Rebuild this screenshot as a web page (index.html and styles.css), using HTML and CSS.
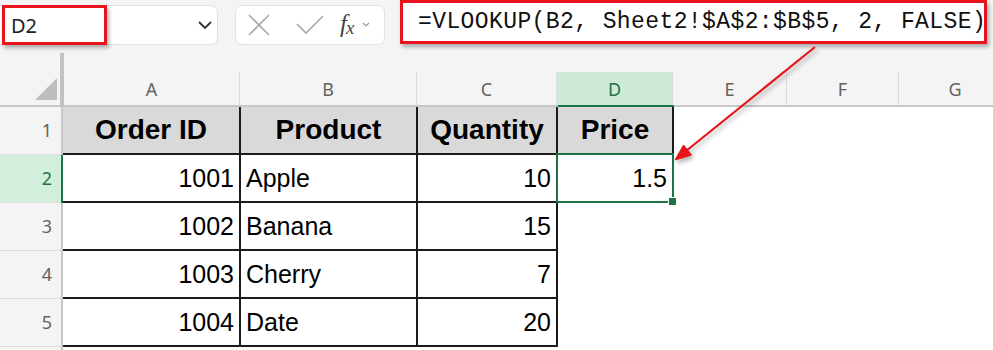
FILE: index.html
```html
<!DOCTYPE html>
<html lang="en">
<head>
  <meta charset="UTF-8" />
  <title>VLOOKUP – Price</title>
  <link rel="stylesheet" href="styles.css">
</head>
<body>
  <div class="toolbar">
    <div class="namebox">
      <span class="ref mark">D2</span>
      <svg class="chev" width="16" height="10" viewBox="0 0 16 10"><path d="M2 2 L8 8 L14 2" fill="none" stroke="#333" stroke-width="1.8"/></svg>
    </div>
    <div class="fxbox">
      <svg class="ico" width="22" height="22" viewBox="0 0 22 22"><path d="M1 1 L21 21 M21 1 L1 21" stroke="#a9a9a9" stroke-width="1.6" fill="none"/></svg>
      <svg class="ico" width="28" height="20" viewBox="0 0 28 20"><path d="M1 9 L10 18 L27 1" stroke="#a9a9a9" stroke-width="1.6" fill="none"/></svg>
      <span class="fx"><i>f</i><sub>x</sub></span>
      <svg class="mini" width="8" height="6" viewBox="0 0 8 6"><path d="M1 1 L4 4 L7 1" stroke="#999" stroke-width="1.2" fill="none"/></svg>
    </div>
    <div class="formula mark">=VLOOKUP(B2, Sheet2!$A$2:$B$5, 2, FALSE)</div>
  </div>

  <table class="sheet">
    <colgroup>
      <col style="width:62px"><col style="width:178px"><col style="width:177px"><col style="width:140px">
      <col style="width:116px"><col style="width:114px"><col style="width:112px"><col style="width:113px">
    </colgroup>
    <thead>
      <tr>
        <th class="corner"><svg width="22" height="22" viewBox="0 0 22 22"><polygon points="22,0 22,22 0,22" fill="#bdbdbd"/></svg></th>
        <th class="col"><div>A</div></th>
        <th class="col"><div>B</div></th>
        <th class="col"><div>C</div></th>
        <th class="col sel"><div>D</div></th>
        <th class="col"><div>E</div></th>
        <th class="col"><div>F</div></th>
        <th class="col"><div>G</div></th>
      </tr>
    </thead>
    <tbody>
      <tr>
        <td class="rh">1</td>
        <td class="c hd">Order ID</td>
        <td class="c hd">Product</td>
        <td class="c hd">Quantity</td>
        <td class="c hd">Price</td>
        <td></td><td></td><td></td>
      </tr>
      <tr>
        <td class="rh sel">2</td>
        <td class="c num">1001</td>
        <td class="c">Apple</td>
        <td class="c num">10</td>
        <td class="c num active">1.5</td>
        <td></td><td></td><td></td>
      </tr>
      <tr>
        <td class="rh">3</td>
        <td class="c num">1002</td>
        <td class="c">Banana</td>
        <td class="c num">15</td>
        <td></td><td></td><td></td><td></td>
      </tr>
      <tr>
        <td class="rh">4</td>
        <td class="c num">1003</td>
        <td class="c">Cherry</td>
        <td class="c num">7</td>
        <td></td><td></td><td></td><td></td>
      </tr>
      <tr>
        <td class="rh">5</td>
        <td class="c num">1004</td>
        <td class="c">Date</td>
        <td class="c num">20</td>
        <td></td><td></td><td></td><td></td>
      </tr>
      <tr class="partial">
        <td class="rh"></td>
        <td></td><td></td><td></td><td></td><td></td><td></td><td></td>
      </tr>
    </tbody>
  </table>

  <svg class="arrow" width="993" height="350" viewBox="0 0 993 350">
    <g fill="#e8141b" stroke="#e8141b">
      <line x1="815" y1="47" x2="686" y2="151" stroke-width="2.2"/>
      <polygon points="675,160 691.5,155 683.5,145" stroke-width="1"/>
    </g>
  </svg>
</body>
</html>
```

FILE: styles.css
```css
:root {
  --gris: #f4f4f4;
  --borde-ui: #c8c8c8;
  --verde: #1f7244;
  --verde-claro: #cde9d7;
  --rojo: #e8141b;
}
* { box-sizing: border-box; }
body {
  margin: 0;
  width: 993px;
  height: 350px;
  overflow: hidden;
  position: relative;
  background: var(--gris);
  font-family: "Liberation Sans", Arial, sans-serif;
  color: #000;
}

/* barra de fórmulas */
.toolbar {
  display: flex;
  align-items: flex-start;
  height: 53px;
}
.mark {
  border: 3px solid var(--rojo);
  box-shadow: 2px 3px 4px rgba(0,0,0,0.3);
}
.namebox {
  margin-top: 5px;
  width: 218px;
  height: 40px;
  background: #fff;
  border: 1px solid #e2e2e2;
  border-left: none;
  border-radius: 0 7px 7px 0;
  display: flex;
  align-items: center;
  justify-content: space-between;
  padding-right: 4px;
}
.ref {
  width: 105px;
  height: 40px;
  margin: 0 0 0 2px;
  padding-left: 6px;
  display: flex;
  align-items: center;
  font: 20px "Noto Sans", sans-serif;
  color: #222;
}
.fxbox {
  margin: 5px 0 0 17px;
  width: 150px;
  height: 40px;
  background: #fff;
  border: 1px solid #e2e2e2;
  border-radius: 7px;
  display: flex;
  align-items: center;
  padding-left: 12px;
}
.fxbox .ico { margin-right: 26px; }
.fxbox .ico + .ico { margin-right: 16px; }
.fx {
  font: 25px "Liberation Serif", serif;
  color: #444;
  line-height: 1;
  margin-top: -2px;
}
.fx sub { font-size: 19px; font-style: italic; vertical-align: -2px; margin-left: -1px; }
.mini { margin-left: 8px; }
.formula {
  margin-left: 15px;
  width: 587px;
  height: 44px;
  background: #fff;
  padding-left: 15px;
  display: flex;
  align-items: center;
  white-space: nowrap;
  overflow: hidden;
  font: 23px "Liberation Mono", monospace;
  letter-spacing: 0.4px;
  color: #111;
}

/* hoja */
.sheet {
  border-collapse: collapse;
  table-layout: fixed;
  width: 1012px;
  background: #fff;
}
.sheet th, .sheet td { padding: 0; }
.corner {
  height: 53px;
  background: var(--gris);
  border-right: 4px solid #c2c2c2;
  border-bottom: 2px solid var(--borde-ui);
  text-align: right;
  vertical-align: bottom;
}
.corner svg { display: block; margin: 0 3px 5px auto; }
.col {
  background: var(--gris);
  vertical-align: bottom;
  border-bottom: 2px solid var(--borde-ui);
}
.col div {
  height: 33px;
  border-right: 1px solid #dcdcdc;
  display: flex;
  align-items: center;
  justify-content: center;
  font: 18px "Noto Sans", sans-serif;
  font-weight: normal;
  color: #626262;
}
.col.sel { border-bottom-color: var(--verde); }
.col.sel div { background: var(--verde-claro); color: var(--verde); }
.sheet tbody tr { height: 48px; }
.rh {
  background: var(--gris);
  border-right: 2px solid var(--borde-ui);
  border-bottom: 1px solid #dedede;
  text-align: right;
  padding-right: 9px !important;
  font: 18px "Noto Sans", sans-serif;
  color: #626262;
}
.rh.sel {
  background: #d2eedd;
  color: var(--verde);
  border-right-color: var(--verde);
}
.c {
  border-right: 2px solid #1b1b1b;
  border-bottom: 2px solid #1b1b1b;
  padding: 0 5px !important;
  font-size: 25px;
  white-space: nowrap;
}
.hd {
  background: #d9d9d9;
  font-weight: bold;
  font-size: 28px;
  text-align: center;
}
.num { text-align: right; }
.active {
  position: relative;
  outline: 2px solid var(--verde);
  outline-offset: -1px;
}
.active::after {
  content: "";
  position: absolute;
  right: -5px;
  bottom: -5px;
  width: 7px;
  height: 7px;
  background: var(--verde);
  border: 1px solid #fff;
}
.arrow {
  position: absolute;
  top: 0;
  left: 0;
  pointer-events: none;
  filter: drop-shadow(2px 3px 2px rgba(0,0,0,0.3));
}
```
